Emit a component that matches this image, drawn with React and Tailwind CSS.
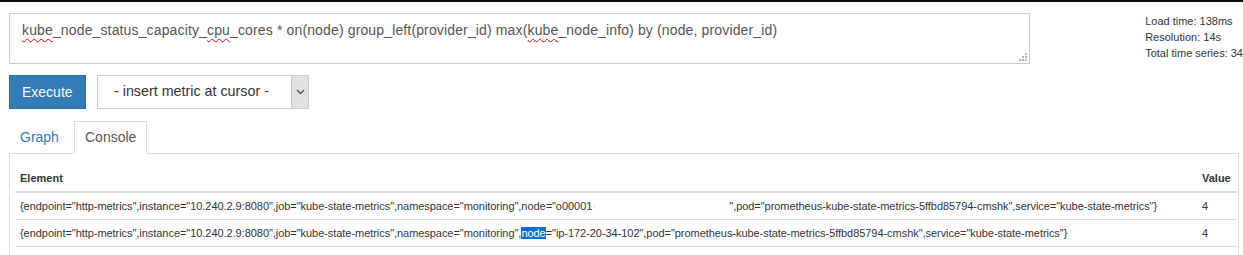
const Squiggle = ({ children }) => (
  <span className="underline decoration-wavy decoration-[#e00000] decoration-1 underline-offset-[3px] [text-decoration-skip-ink:none]">
    {children}
  </span>
);

const rows = [
  {
    id: 1,
    value: '4',
    content: (
      <>
        {'{endpoint="http-metrics",instance="10.240.2.9:8080",job="kube-state-metrics",namespace="monitoring",node="o00001'}
        <span className="inline-block w-[137px] text-[#bbb]">·</span>
        {'",pod="prometheus-kube-state-metrics-5ffbd85794-cmshk",service="kube-state-metrics"}'}
      </>
    ),
  },
  {
    id: 2,
    value: '4',
    content: (
      <>
        {'{endpoint="http-metrics",instance="10.240.2.9:8080",job="kube-state-metrics",namespace="monitoring",'}
        <span className="bg-[#0b6fd3] text-white">node</span>
        {'="ip-172-20-34-102",pod="prometheus-kube-state-metrics-5ffbd85794-cmshk",service="kube-state-metrics"}'}
      </>
    ),
  },
];

const App = () => {
  return (
    <div className="w-[1243px] h-[255px] overflow-hidden bg-white font-['Liberation_Sans',Arial,sans-serif] text-[#333]">
      <div className="h-[2px] bg-[#111]" />

      {/* Expression + stats */}
      <div className="flex items-start pt-[11px] pl-[9px]">
        <div className="relative w-[1022px] h-[51px] border border-[#ccc] px-[12px] py-[6px] text-[14px] leading-[20px] tracking-[0.14px] text-[#555] whitespace-nowrap">
          <Squiggle>kube</Squiggle>_node_status_capacity_<Squiggle>cpu</Squiggle>_cores * on(node) group_left(provider_id) max(
          <Squiggle>kube</Squiggle>_node_info) by (node, provider_id)
          <svg className="absolute right-[2px] bottom-[2px]" width="8" height="8" viewBox="0 0 8 8">
            <rect x="6" y="0" width="2" height="2" fill="#b5b5b5" />
            <rect x="3" y="3" width="2" height="2" fill="#b5b5b5" />
            <rect x="6" y="3" width="2" height="2" fill="#b5b5b5" />
            <rect x="0" y="6" width="2" height="2" fill="#b5b5b5" />
            <rect x="3" y="6" width="2" height="2" fill="#b5b5b5" />
            <rect x="6" y="6" width="2" height="2" fill="#b5b5b5" />
          </svg>
        </div>
        <div className="ml-[115px] text-[11px] leading-[16px] text-[#333] whitespace-nowrap">
          <div>Load time: 138ms</div>
          <div>Resolution: 14s</div>
          <div>Total time series: 34</div>
        </div>
      </div>

      {/* Execute + metric select */}
      <div className="flex items-center mt-[11px] pl-[9px]">
        <button className="w-[77px] h-[34px] bg-[#337ab7] border border-[#2e6da4] text-white text-[14px] text-left pl-[12px]">
          Execute
        </button>
        <div className="ml-[11px] w-[212px] h-[34px] border border-[#ccc] flex">
          <div className="flex-1 flex items-center pl-[16px] text-[14.3px] text-[#333]">
            - insert metric at cursor -
          </div>
          <div className="w-[17px] bg-[#e1e1e1] border-l border-[#c4c4c4] flex items-center justify-center">
            <svg width="9" height="6" viewBox="0 0 9 6">
              <path d="M1 1l3.5 3.5L8 1" fill="none" stroke="#555" strokeWidth="1.4" />
            </svg>
          </div>
        </div>
      </div>

      {/* Tabs */}
      <div className="flex mt-[12px] pl-[9px] text-[14px] leading-[20px]">
        <div className="w-[65px] pl-[11px] pt-[6px] text-[#337ab7]">Graph</div>
        <div className="border border-[#ddd] border-b-white bg-white px-[10px] pt-[5px] pb-[6px] text-[#555] -mb-px relative z-10">
          Console
        </div>
      </div>

      {/* Console panel */}
      <div className="ml-[9px] w-[1230px] h-[200px] border border-[#ddd] pl-[5px] pr-[1px] pt-[16px] text-[11px] leading-[16px]">
        <div className="flex border-b-2 border-[#ddd] font-bold pb-[5px]">
          <div className="flex-1 px-[5px]">Element</div>
          <div className="w-[40px] px-[5px]">Value</div>
        </div>
        {rows.map((row) => (
          <div key={row.id} className="flex border-b border-[#ddd] py-[5px]">
            <div className="flex-1 px-[5px] whitespace-nowrap tracking-[-0.05px]">{row.content}</div>
            <div className="w-[40px] px-[5px]">{row.value}</div>
          </div>
        ))}
      </div>
    </div>
  );
};

export default App;
